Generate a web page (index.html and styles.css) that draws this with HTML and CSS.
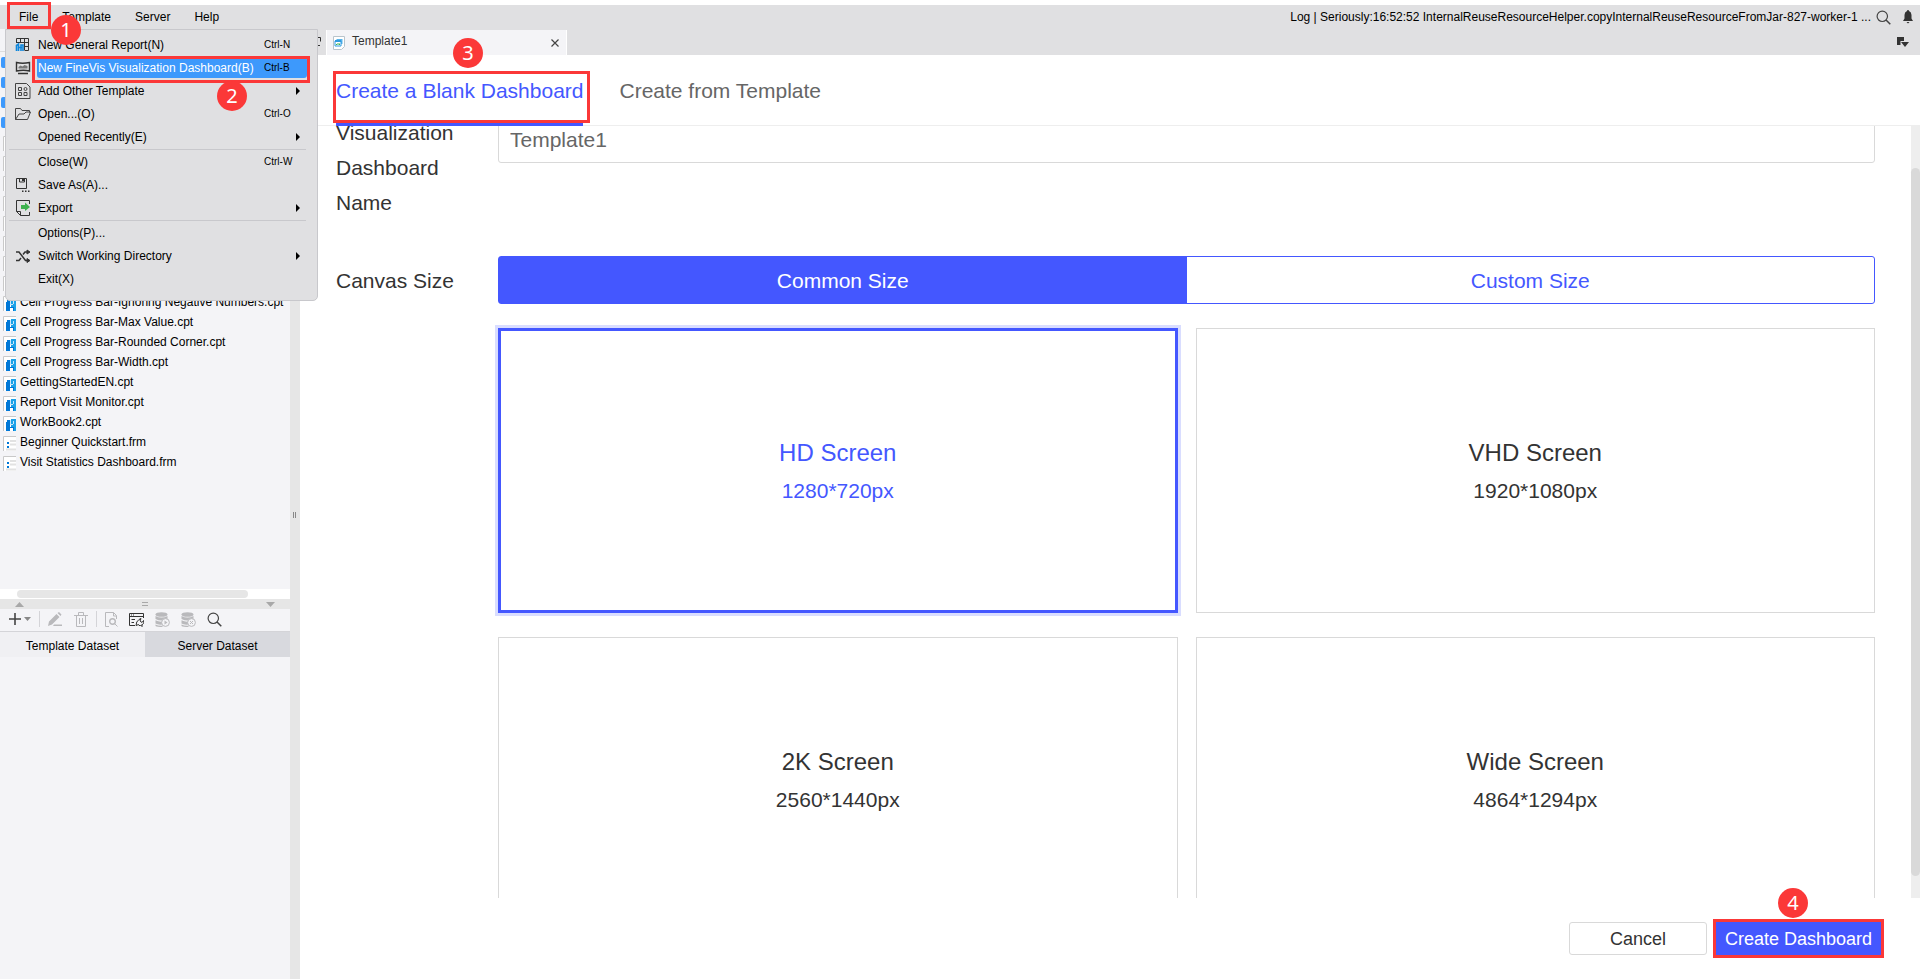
FILE: index.html
```html
<!DOCTYPE html>
<html lang="en">

<head>
    <meta charset="UTF-8">
    <meta name="viewport" content="width=device-width, initial-scale=1.0">
    <title>Template1</title>
    <link rel="stylesheet" href="styles.css">
</head>

<body>
    <!-- shared icons -->
    <svg class="defs" aria-hidden="true">
        <symbol id="i-cpt" viewBox="0 0 13 15">
            <path d="M0 0h13v15H0z" fill="#fff" />
            <path d="M.5 15V.5H13" fill="none" stroke="#c9c9c9" />
            <g shape-rendering="crispEdges">
                <path d="M3 15V6h1V4h3v7h3v-1h3v5h-3v-3H7v3z" fill="#0078d7" />
                <path d="M8 3h5v12h-2v-4H8z" fill="#1ba1e8" />
                <path d="M7 4h1v4h2v1H7zM10 5h1v3h-1z" fill="#c8e6fa" />
            </g>
        </symbol>
        <symbol id="i-frm" viewBox="0 0 13 15">
            <path d="M0 0h13v15H0z" fill="#fff" />
            <path d="M.5 15V.5H13" fill="none" stroke="#c9c9c9" />
            <path d="M4 6h2v2H4zM4 10h2v2H4z" fill="#0078d7" />
            <path d="M7 5h6M7 8.5h6M3 13.5h10" stroke="#e2e2e2" stroke-width="2" />
        </symbol>
        <symbol id="i-folder" viewBox="0 0 13 15">
            <path d="M0 4q0-2 2-2h11v11H2q-2 0-2-2z" fill="#3d99fc" />
        </symbol>
        <symbol id="i-search" viewBox="0 0 15 15">
            <circle cx="6.3" cy="6.3" r="5.2" fill="none" stroke="currentColor" stroke-width="1.2" />
            <path d="M10 10l4.3 4.3" stroke="currentColor" stroke-width="1.5" />
        </symbol>
        <symbol id="i-db" viewBox="0 0 15 15">
            <ellipse cx="6.5" cy="2.5" rx="6" ry="2.3" fill="#b9b9bc" />
            <path d="M.5 4q6 3 12 0v3q-6 3-12 0zM.5 8.3q4 1.8 7 1.2v3Q3 13 .5 11.6zM.5 12.6q3 1.5 7 1.2v1.2Q2 15 .5 14z" fill="#b9b9bc" />
            <circle cx="10.5" cy="10.5" r="3.9" fill="#f4f4f7" stroke="#b9b9bc" />
        </symbol>
    </svg>

    <header class="menubar">
        <nav class="menus">
            <div class="menu-holder">
                <button class="menu-btn">File</button>
                <span class="mark mark-file"></span>
                <span class="badge badge-1">1</span>
                <ul class="menu">
                    <li class="menu-item">
                        <svg class="menu-icon" viewBox="0 0 16 16" fill="none" stroke="#333">
                            <path d="M1.5 6V1.5h12v12H10M1.5 5.5h12M5.5 1.5v4M9.5 1.5v12M10 9.5h3.5" />
                            <path d="M1.5 14V8.5l2-1.5v7M4 10.5h3M6 14V8h2v6" stroke="#0e86dc" stroke-width="1.6" />
                        </svg>
                        <button class="menu-row">New General Report(N)<kbd>Ctrl-N</kbd></button>
                    </li>
                    <li class="menu-item active">
                        <svg class="menu-icon" viewBox="0 0 16 16" fill="none" stroke="#333">
                            <path d="M1.5 2.5q6 1.5 13 0v8.500q-6-1.500-13 0zM3 13.500h10" stroke-width="1.4" />
                            <path d="M3.500 8.500V7l2-1.500 2 1 2-1.500 3 1v2.500z" fill="#777" stroke="none" />
                        </svg>
                        <button class="menu-row">New FineVis Visualization Dashboard(B)<kbd>Ctrl-B</kbd></button>
                        <span class="mark mark-new"></span>
                        <span class="badge badge-2">2</span>
                    </li>
                    <li class="menu-item">
                        <svg class="menu-icon" viewBox="0 0 16 16" fill="none" stroke="#444">
                            <path d="M.5.5h11l3.500 3.500v11.500H.5z" />
                            <path d="M3.500 4.500h3v3h-3zM3.500 9.500h3v3h-3zM9 9.500h3v3H9z" />
                            <circle cx="10.5" cy="6" r="1.5" />
                        </svg>
                        <button class="menu-row">Add Other Template<i class="arrow"></i></button>
                    </li>
                    <li class="menu-item">
                        <svg class="menu-icon" viewBox="0 0 16 16" fill="none" stroke="#444">
                            <path d="M.5 13.500v-11h5l1.500 2h7.500v2M.5 13.500l3.500-5.500 5 0 2-2h4.500l-3 7.500z" />
                        </svg>
                        <button class="menu-row">Open...(O)<kbd>Ctrl-O</kbd></button>
                    </li>
                    <li class="menu-item">
                        <span class="menu-icon"></span>
                        <button class="menu-row">Opened Recently(E)<i class="arrow"></i></button>
                    </li>
                    <li class="menu-line"></li>
                    <li class="menu-item">
                        <span class="menu-icon"></span>
                        <button class="menu-row">Close(W)<kbd>Ctrl-W</kbd></button>
                    </li>
                    <li class="menu-item">
                        <svg class="menu-icon" viewBox="0 0 16 16" fill="none" stroke="#333">
                            <path d="M1.500 1.500h10v10h-10zM4.500 1.500v3.500h5V1.500" />
                            <path d="M7 2h2v2H7zM7 13.500h1.500v1.500H7zM10 13.500h1.500v1.500H10zM13 13.500h1.500v1.500H13z" fill="#333" stroke="none" />
                        </svg>
                        <button class="menu-row">Save As(A)...</button>
                    </li>
                    <li class="menu-item">
                        <svg class="menu-icon" viewBox="0 0 16 16" fill="none" stroke="#333">
                            <path d="M14.500 4V.5h-13v11l4 4h9V12M1.500 11.500h4v4" />
                            <path d="M6 5h4V2.500l5 4.500-5 4V9H6z" fill="#3fb250" stroke="none" />
                        </svg>
                        <button class="menu-row">Export<i class="arrow"></i></button>
                    </li>
                    <li class="menu-line"></li>
                    <li class="menu-item">
                        <span class="menu-icon"></span>
                        <button class="menu-row">Options(P)...</button>
                    </li>
                    <li class="menu-item">
                        <svg class="menu-icon" viewBox="0 0 16 16" fill="none" stroke="#333" stroke-width="1.5">
                            <path d="M1 4h3l6.500 8.500H13M1 12.500h3L6 10M8 6.500l2-2.500h3" />
                            <path d="M12 2l3 2-3 2zM12 10.500l3 2-3 2z" fill="#333" stroke-width="1" />
                        </svg>
                        <button class="menu-row">Switch Working Directory<i class="arrow"></i></button>
                    </li>
                    <li class="menu-item">
                        <span class="menu-icon"></span>
                        <button class="menu-row">Exit(X)</button>
                    </li>
                </ul>
            </div>
            <button class="menu-btn">Template</button>
            <button class="menu-btn">Server</button>
            <button class="menu-btn">Help</button>
        </nav>
        <div class="status">
            <span class="log">Log | Seriously:16:52:52 InternalReuseResourceHelper.copyInternalReuseResourceFromJar-827-worker-1 ...</span>
            <button class="icon-btn" aria-label="Search"><svg width="15" height="15"><use href="#i-search" /></svg></button>
            <button class="icon-btn" aria-label="Notifications">
                <svg width="10" height="14" viewBox="0 0 10 14" fill="#333">
                    <path d="M5 0q1 0 1 1 2.500 1 2.500 4v3.500L10 11H0l1.500-2.500V5Q1.500 2 4 1 4 0 5 0zM3.500 12h3L5 13.500z" />
                </svg>
            </button>
        </div>
    </header>

    <div class="work">
        <aside class="side">
            <div class="side-head"></div>
            <ul class="files">
                <li class="file"><svg class="folder"><use href="#i-folder" /></svg></li>
                <li class="file"><svg class="folder"><use href="#i-folder" /></svg></li>
                <li class="file"><svg class="folder"><use href="#i-folder" /></svg></li>
                <li class="file"><svg class="folder"><use href="#i-folder" /></svg></li>
                <li class="file"><svg><use href="#i-cpt" /></svg></li>
                <li class="file"><svg><use href="#i-cpt" /></svg></li>
                <li class="file"><svg><use href="#i-cpt" /></svg></li>
                <li class="file"><svg><use href="#i-cpt" /></svg></li>
                <li class="file"><svg><use href="#i-cpt" /></svg></li>
                <li class="file"><svg><use href="#i-cpt" /></svg></li>
                <li class="file"><svg><use href="#i-cpt" /></svg></li>
                <li class="file"><svg><use href="#i-cpt" /></svg></li>
                <li class="file"><svg><use href="#i-cpt" /></svg>Cell Progress Bar-Ignoring Negative Numbers.cpt</li>
                <li class="file"><svg><use href="#i-cpt" /></svg>Cell Progress Bar-Max Value.cpt</li>
                <li class="file"><svg><use href="#i-cpt" /></svg>Cell Progress Bar-Rounded Corner.cpt</li>
                <li class="file"><svg><use href="#i-cpt" /></svg>Cell Progress Bar-Width.cpt</li>
                <li class="file"><svg><use href="#i-cpt" /></svg>GettingStartedEN.cpt</li>
                <li class="file"><svg><use href="#i-cpt" /></svg>Report Visit Monitor.cpt</li>
                <li class="file"><svg><use href="#i-cpt" /></svg>WorkBook2.cpt</li>
                <li class="file"><svg><use href="#i-frm" /></svg>Beginner Quickstart.frm</li>
                <li class="file"><svg><use href="#i-frm" /></svg>Visit Statistics Dashboard.frm</li>
            </ul>
            <div class="hscroll"><div class="hthumb"></div></div>
            <div class="splitter">
                <svg width="9" height="5" viewBox="0 0 9 5"><path d="M0 5l4.500-5L9 5z" fill="#a8a8a8" /></svg>
                <svg width="6" height="4" viewBox="0 0 6 4"><path d="M0 .5h6M0 3.500h6" stroke="#a8a8a8" /></svg>
                <svg width="9" height="5" viewBox="0 0 9 5"><path d="M0 0h9L4.500 5z" fill="#a8a8a8" /></svg>
            </div>
            <div class="tools">
                <button class="icon-btn" aria-label="Add">
                    <svg width="22" height="12" viewBox="0 0 22 12">
                        <path d="M6 0v12M0 6h12" stroke="#444" stroke-width="1.6" />
                        <path d="M15 4h7l-3.500 4z" fill="#888" />
                    </svg>
                </button>
                <span class="tool-line"></span>
                <button class="icon-btn" aria-label="Edit">
                    <svg width="15" height="15" viewBox="0 0 15 15" fill="#b9b9bc"><path d="M0 14l1-4.500L8.500 2l3 3L4 12.500zM9.500 1l1.500-1 2.500 2.500-1 1.500zM6 12.500h8V14H5z" /></svg>
                </button>
                <button class="icon-btn" aria-label="Delete">
                    <svg width="14" height="15" viewBox="0 0 14 15" fill="none" stroke="#b9b9bc"><path d="M0 3.500h14M4.500 3V.5h5V3M2.500 4v10.500h9V4M5.500 6v6M8.500 6v6" /></svg>
                </button>
                <span class="tool-line"></span>
                <button class="icon-btn" aria-label="Preview">
                    <svg width="13" height="15" viewBox="0 0 13 15" fill="none" stroke="#b9b9bc"><path d="M4 14.500H.5V.5h8l3 3V7M8.500.5V4h3M10 12l2.500 2.500" /><circle cx="7.5" cy="9.5" r="2.8" stroke-width="1.4" /></svg>
                </button>
                <button class="icon-btn" aria-label="Configure">
                    <svg width="15" height="15" viewBox="0 0 15 15" fill="none" stroke="#333"><path d="M14.500 6V1.500H.5v12H6M.5 4.500h14M2 3h1M4 3h1M2.500 7.500H6M2.500 10.500H5M7 13.500q0-4 3-6l2-1-1 2.500 2 1.500 1.500-2q1 4-3 5-2 .5-2-1zM14 14h-2" /></svg>
                </button>
                <button class="icon-btn" aria-label="Run">
                    <svg width="15" height="15" viewBox="0 0 15 15"><use href="#i-db" /><path d="M9.500 8.500l3 2-3 2z" fill="#b9b9bc" /></svg>
                </button>
                <button class="icon-btn" aria-label="Stop">
                    <svg width="15" height="15" viewBox="0 0 15 15"><use href="#i-db" /><path d="M9 9l3 3M12 9l-3 3" stroke="#b9b9bc" /></svg>
                </button>
                <button class="icon-btn" aria-label="Find"><svg width="15" height="15"><use href="#i-search" /></svg></button>
            </div>
            <div class="sets">
                <button class="set active">Template Dataset</button>
                <button class="set">Server Dataset</button>
            </div>
        </aside>
        <div class="grip"><i></i><i></i></div>

        <main class="main">
            <div class="strip">
                <svg width="3" height="11" viewBox="0 0 3 11" fill="none" stroke="#333"><path d="M0 .5h2.500v4M0 8.500h2" /></svg>
                <div class="doc-tab">
                    <svg width="12" height="14" viewBox="0 0 12 14">
                        <path d="M.5.5h11v10l-3 3h-8z" fill="#fff" stroke="#b8c4cc" />
                        <path d="M3.500 3h6v5h-6z" fill="#5ab4ea" />
                        <path d="M2 5h6v5H2z" fill="#fff" stroke="#2f9be0" />
                        <path d="M2 5h6" stroke="#2f9be0" stroke-width="2" />
                        <path d="M3.500 9V8M5 9V7M6.500 9V7.500" stroke="#3fb250" />
                    </svg>
                    <span>Template1</span>
                    <button class="icon-btn" aria-label="Close tab">
                        <svg width="8" height="8" viewBox="0 0 8 8"><path d="M.5.5l7 7M7.500.5l-7 7" stroke="#444" stroke-width="1.2" /></svg>
                    </button>
                </div>
                <button class="icon-btn" aria-label="Tab list">
                    <svg width="13" height="12" viewBox="0 0 13 12" fill="#333"><path d="M0 0h7v4H3.500v4H0zM4 5h8l-4 5z" /></svg>
                </button>
            </div>

            <div class="tabs">
                <button class="tab active">Create a Blank Dashboard<span class="mark mark-tab"></span><span class="badge badge-3">3</span></button>
                <button class="tab">Create from Template</button>
            </div>

            <div class="scroll">
                <form class="form" id="create">
                    <label class="label" for="name">Visualization Dashboard Name</label>
                    <input class="name" id="name" type="text" value="Template1">
                    <span class="label size-label">Canvas Size</span>
                    <div class="canvas">
                        <div class="switch">
                            <button type="button" class="active">Common Size</button>
                            <button type="button">Custom Size</button>
                        </div>
                        <div class="cards">
                            <button type="button" class="card active"><span>HD Screen</span><small>1280*720px</small></button>
                            <button type="button" class="card"><span>VHD Screen</span><small>1920*1080px</small></button>
                            <button type="button" class="card"><span>2K Screen</span><small>2560*1440px</small></button>
                            <button type="button" class="card"><span>Wide Screen</span><small>4864*1294px</small></button>
                        </div>
                    </div>
                </form>
                <div class="vscroll"><div class="vthumb"></div></div>
            </div>

            <footer class="foot">
                <button class="btn">Cancel</button>
                <button class="btn primary" form="create">Create Dashboard<span class="mark mark-create"></span><span class="badge badge-4">4</span></button>
            </footer>
        </main>
    </div>
</body>

</html>
```
FILE: styles.css
```css
* {
    padding: 0;
    margin: 0;
    box-sizing: border-box;
}

body {
    height: 100vh;
    display: flex;
    flex-direction: column;
    padding-top: 5px;
    overflow: hidden;
    background-color: #fff;
    color: #000;
    font: 12px/20px "Liberation Sans", Arial, sans-serif;
}

button {
    border: 0;
    background: none;
    font: inherit;
    color: inherit;
    cursor: pointer;
}

ul {
    list-style: none;
}

svg {
    display: block;
    flex: none;
}

.defs {
    position: absolute;
    width: 0;
    height: 0;
}

/* red frames and step numbers */

.mark {
    position: absolute;
    z-index: 20;
    border: 3px solid #fb3838;
    pointer-events: none;
}

.badge {
    position: absolute;
    z-index: 30;
    width: 30px;
    height: 30px;
    border-radius: 50%;
    background-color: #fb3838;
    color: #fff;
    font: 20px/30px "Noto Sans", sans-serif;
    text-align: center;
}

.mark-file {
    inset: -3px -1px 0 0;
}

.badge-1 {
    left: 44px;
    top: 10px;
}

.mark-new {
    inset: 0 7px -4px 26px;
}

.badge-2 {
    right: 70px;
    top: 25px;
}

.mark-tab {
    inset: 16px -7px 3px -3px;
}

.badge-3 {
    left: 117px;
    top: -17px;
}

.mark-create {
    inset: -3px;
}

.badge-4 {
    left: 62px;
    top: -34px;
}

/* top bar */

.menubar {
    display: flex;
    justify-content: space-between;
    height: 24px;
    padding: 0 7px;
    background-color: #e0e0e2;
}

.menus,
.status {
    display: flex;
    align-items: center;
}

.menu-holder {
    position: relative;
}

.menu-btn {
    height: 24px;
    padding: 0 12px;
}

.status {
    gap: 12px;
}

.log {
    margin-right: -7px;
    white-space: nowrap;
}

.icon-btn {
    display: flex;
    color: #444;
}

.menu {
    position: absolute;
    z-index: 10;
    left: -2px;
    top: 24px;
    width: 313px;
    padding: 3px 0 10px;
    border: 1px solid #c8c8cc;
    border-radius: 0 0 5px 5px;
    background-color: #e0e0e2;
}

.menu-item {
    position: relative;
    display: flex;
    align-items: center;
    height: 23px;
    padding: 0 10px 0 9px;
}

.menu-icon {
    width: 16px;
    height: 16px;
    margin-right: 6px;
}

.menu-row {
    flex: 1;
    display: flex;
    justify-content: space-between;
    align-items: center;
    height: 21px;
    padding-left: 1px;
    white-space: nowrap;
}

.menu-row kbd {
    width: 43px;
    font: 10px/20px "Liberation Sans", Arial, sans-serif;
    text-align: left;
}

.active .menu-row {
    border-radius: 3px;
    background-color: #3d99fc;
    color: #fff;
}

.active kbd {
    color: #000;
}

.arrow {
    margin-right: 7px;
    border: 4px solid transparent;
    border-left-color: #000;
    border-right: 0;
}

.menu-line {
    height: 2px;
    margin: 0 11px 0 3px;
    border-bottom: 1px solid #c8c8cc;
}

/* left panel */

.work {
    flex: 1;
    display: flex;
    min-height: 0;
}

.side {
    width: 290px;
    display: flex;
    flex-direction: column;
    background-color: #f4f4f7;
}

.side-head {
    height: 23px;
    border-bottom: 1px solid #ddd;
}

.files {
    height: 537px;
    overflow: hidden;
}

.file {
    display: flex;
    align-items: center;
    gap: 4px;
    height: 20px;
    padding-left: 3px;
    white-space: nowrap;
}

.file svg {
    width: 13px;
    height: 15px;
    margin-top: 3px;
}

.file .folder {
    margin: 0 0 0 -2px;
}

.hscroll {
    height: 10px;
    padding: 1px 42px 1px 17px;
    background-color: #fff;
}

.hthumb {
    height: 8px;
    border-radius: 4px;
    background-color: #e6e6e6;
}

.splitter {
    display: flex;
    justify-content: space-between;
    align-items: center;
    height: 10px;
    padding: 0 15px;
    background-color: #e6e6e6;
}

.tools {
    display: flex;
    align-items: center;
    gap: 11px;
    height: 22px;
    padding: 0 0 2px 9px;
}

.tool-line {
    width: 1px;
    height: 16px;
    margin: 0 -3px;
    background-color: #d4d4d8;
}

.sets {
    display: flex;
    height: 26px;
    border-top: 1px solid #d4d4d8;
}

.set {
    flex: 1;
    padding-top: 2px;
    background-color: #d8d9de;
}

.set.active {
    background-color: #f0f0f3;
}

.grip {
    display: flex;
    justify-content: center;
    align-items: center;
    gap: 1px;
    width: 10px;
    padding: 22px 1px 0 0;
    background-color: #e6e6e6;
}

.grip i {
    width: 1px;
    height: 6px;
    background-color: #888;
}

/* work area */

.main {
    flex: 1;
    display: flex;
    flex-direction: column;
    min-width: 0;
    background-color: #fff;
    font-size: 21px;
}

.strip {
    display: flex;
    align-items: center;
    gap: 5px;
    height: 26px;
    padding: 1px 10px 0 18px;
    background-color: #e0e0e2;
    font-size: 12px;
}

.doc-tab {
    display: flex;
    align-items: center;
    width: 241px;
    height: 25px;
    margin-right: auto;
    padding: 0 7px 0 6px;
    border: 1px solid #fff;
    border-width: 0 1px;
    background-color: #f4f4f7;
    color: #333;
}

.doc-tab span {
    flex: 1;
    padding: 0 0 3px 7px;
}

.tabs {
    display: flex;
    gap: 36px;
    height: 71px;
    padding-left: 36px;
    box-shadow: inset 0 -1px #eee;
}

.tab {
    position: relative;
    padding-top: 1px;
    color: #666;
}

.tab.active {
    color: #4457ff;
}

.tab.active::after {
    content: "";
    position: absolute;
    left: 0;
    right: 0;
    bottom: 0;
    height: 3px;
    background-color: #4457ff;
}

.scroll {
    flex: 1;
    display: flex;
    min-height: 0;
    overflow: hidden;
}

.form {
    flex: 1;
    display: grid;
    grid-template-columns: 162px 1fr;
    align-content: start;
    row-gap: 36px;
    margin-top: -11px;
    padding: 0 36px;
}

.label {
    padding-right: 30px;
    color: #333;
    line-height: 35px;
}

.size-label {
    padding: 1px 0 0;
    line-height: 48px;
}

.name {
    width: 100%;
    height: 48px;
    padding: 2px 11px 0;
    border: 1px solid #d9d9d9;
    border-radius: 3px;
    color: #666;
    font: inherit;
}

.switch {
    display: flex;
    height: 48px;
    margin-bottom: 24px;
    border: 1px solid #4457ff;
    border-radius: 3px;
}

.switch button {
    flex: 1;
    padding-top: 2px;
    color: #4457ff;
}

.switch .active {
    background-color: #4457ff;
    color: #fff;
}

.cards {
    display: grid;
    grid-template-columns: 1fr 1fr;
    gap: 24px 18px;
}

.card {
    height: 285px;
    border: 1px solid #d9d9d9;
    color: #333;
}

.card span,
.card small {
    display: block;
}

.card span {
    font-size: 24px;
    line-height: 40px;
}

.card small {
    font-size: 21px;
    line-height: 36px;
}

.card.active {
    border: 3px solid #4457ff;
    box-shadow: 0 0 0 3px #d9ddff;
    color: #4457ff;
}

.vscroll {
    width: 9px;
    padding: 42px 0 22px;
    background-color: #eee;
}

.vthumb {
    height: 100%;
    border-radius: 5px;
    background-color: #d9d9d9;
}

.foot {
    display: flex;
    justify-content: flex-end;
    gap: 9px;
    height: 81px;
    padding: 24px 39px 0 0;
    font-size: 18px;
}

.btn {
    position: relative;
    height: 33px;
    min-width: 138px;
    padding: 0 9px;
    border: 1px solid #d9d9d9;
    border-radius: 3px;
    color: #333;
}

.btn.primary {
    border: 0;
    border-radius: 0;
    background-color: #4457ff;
    color: #fff;
}
```
